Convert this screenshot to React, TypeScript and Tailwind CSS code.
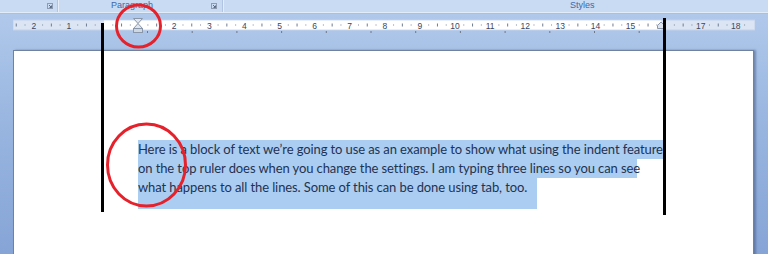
const CM = 35.1;
const ORIGIN = 91; // ruler zero, local to the ruler svg (page x 104)

function RulerMarks() {
  const marks = [];
  for (let q = -10; q <= 74; q++) {
    const x = ORIGIN + (q * CM) / 4;
    if (x < 2 || x > 740) continue;
    const r = ((q % 4) + 4) % 4;
    if (r === 0) {
      const n = Math.abs(q / 4);
      if (n === 0 || q === 4 || q === 64) continue;
      marks.push(
        <text key={q} x={x} y={11.5} textAnchor="middle" fontSize="8.5" fill="#3b4760" fontFamily="'Liberation Sans', Arial, sans-serif">
          {n}
        </text>
      );
    } else if (r === 2) {
      marks.push(<rect key={q} x={x - 0.5} y={6.5} width={1} height={3} fill="#707c90" />);
    } else {
      marks.push(<rect key={q} x={x - 0.5} y={7.5} width={1} height={1} fill="#7a869a" />);
    }
  }
  return <>{marks}</>;
}

function Ruler() {
  const tabs = Array.from({ length: 12 }, (_, k) => 147 + k * 44.7 - 13);
  return (
    <svg width="742" height="18" className="block">
      <rect x="0" y="3" width="742" height="10" fill="#dbe5f4" stroke="#c3d3ea" strokeWidth="1" />
      <rect x={ORIGIN} y="3.5" width={648 - ORIGIN} height="9" fill="#ffffff" />
      <RulerMarks />
      {tabs.map((x, i) => (
        <rect key={i} x={x} y={14} width={1} height={2} fill="#6f7785" />
      ))}
      {/* hourglass indent markers */}
      <path d="M120.5 1.5 H129.5 L125 6.5 Z" fill="#dfe5ee" stroke="#8a97ab" strokeWidth="1" />
      <path d="M125 6.5 L129.5 11.5 H120.5 Z" fill="#dfe5ee" stroke="#8a97ab" strokeWidth="1" />
      <rect x="120.5" y="11.5" width="9" height="4" fill="#cfd7e3" stroke="#8a97ab" strokeWidth="1" />
      {/* right indent marker */}
      <path d="M644.5 11.5 V8.5 L648 5 L651.5 8.5 V11.5 Z" fill="#dfe5ee" stroke="#8a97ab" strokeWidth="1" />
    </svg>
  );
}

function Launcher() {
  return (
    <svg width="6" height="6" className="block">
      <rect x="0.5" y="0.5" width="5" height="5" fill="none" stroke="#8d9bb0" />
      <path d="M2 2 L4.5 4.5 M4.5 2.5 V4.5 H2.5" stroke="#5b6b85" fill="none" strokeWidth="1" />
    </svg>
  );
}

const lines = [
  { text: 'Here is a block of text we’re going to use as an example to show what using the indent feature', w: 'w-[525px]', h: 'h-[19px]' },
  { text: 'on the top ruler does when you change the settings. I am typing three lines so you can see', w: 'w-[499px]', h: 'h-[19px]' },
  { text: 'what happens to all the lines.  Some of this can be done using tab, too.', w: 'w-[399px]', h: 'h-[31px]' },
];

export default function App() {
  return (
    <div className="relative w-[768px] h-[254px] overflow-hidden bg-gradient-to-b from-[#b3cbec] via-[#98b5e0] to-[#86a4d6]">
      {/* ribbon group labels */}
      <div className="flex h-[12px] bg-[#c8dbf2] text-[9px] leading-[12px] text-[#3e67aa]" style={{ fontFamily: "'Liberation Sans', Arial, sans-serif" }}>
        <div className="w-[57px] flex items-start justify-end pr-[4px] pt-[3px]">
          <Launcher />
        </div>
        <div className="w-[2px] bg-[#e4edf8] border-l border-[#afc5e3]" />
        <div className="w-[163px] flex items-start pt-0">
          <span className="pl-[52px] flex-1 -mt-[1px]">Paragraph</span>
          <div className="pr-[5px] pt-[3px]">
            <Launcher />
          </div>
        </div>
        <div className="w-[2px] bg-[#e4edf8] border-l border-[#afc5e3]" />
        <div className="flex-1 pl-[346px] -mt-[1px]">Styles</div>
      </div>
      <div className="h-[1px] bg-[#e2ecf8]" />
      <div className="h-[1px] bg-[#a9c0e2]" />

      {/* ruler */}
      <div className="pl-[13px] pt-[3px] h-[36px]">
        <Ruler />
      </div>

      {/* page */}
      <div className="ml-[13px] w-[741px] h-[210px] bg-white border-l border-t border-r border-[#71829e] shadow-[2px_0_2px_rgba(60,80,120,0.5)]">
        <div className="pt-[89px] pl-[124px] text-[13px] tracking-[-0.1px] text-[#1f3352]" style={{ fontFamily: "Lato, 'Open Sans', sans-serif" }}>
          {lines.map((l, i) => (
            <div key={i} className={`${l.w} ${l.h} bg-[#abcdf1] leading-[19px] whitespace-nowrap`}>
              {l.text}
            </div>
          ))}
        </div>
      </div>

      {/* annotation overlay */}
      <svg className="absolute inset-0 pointer-events-none" width="768" height="254">
        <rect x="101" y="23" width="3" height="189" fill="#000" />
        <rect x="663" y="18" width="3" height="197" fill="#000" />
        <ellipse cx="138.5" cy="26" rx="22" ry="21" fill="none" stroke="#e5222b" strokeWidth="3" />
        <ellipse cx="146.5" cy="165" rx="39" ry="41" fill="none" stroke="#e5222b" strokeWidth="3" />
      </svg>
    </div>
  );
}
